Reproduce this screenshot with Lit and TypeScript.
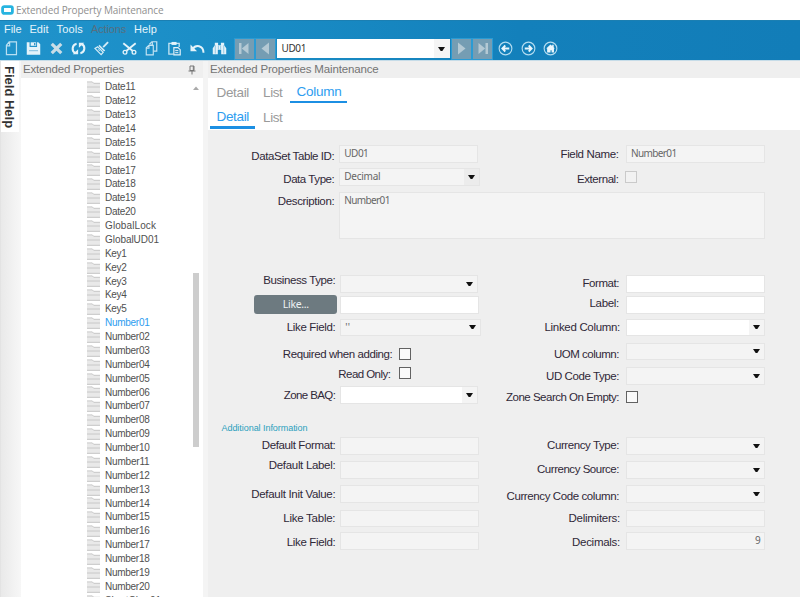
import { LitElement, html, css, svg, nothing } from "lit";
import { customElement, property } from "lit/decorators.js";
import { styleMap } from "lit/directives/style-map.js";

/** Single line of text tracked so that it occupies exactly `w` pixels. */
@customElement("fit-text")
class FitText extends LitElement {
  @property({ type: Number }) w = 0;
  @property() text = "";
  static styles = css`
    :host { display: inline-block; white-space: pre; }
    .t { display: inline-block; }
  `;
  updated() {
    const el = this.renderRoot.querySelector(".t") as HTMLElement;
    el.style.letterSpacing = "0px";
    const natural = el.getBoundingClientRect().width;
    if (this.w && natural) {
      el.style.letterSpacing = `${(this.w - natural) / this.text.length}px`;
    }
  }
  render() {
    return html`<span class="t">${this.text}</span>`;
  }
}

type Kind = "box" | "white" | "combo" | "whiteCombo" | "check" | "checkOff" | "area";

interface Field {
  label: string;
  w: number;        // label width
  end?: number;     // space between label and control
  base: number;     // label offset from the row top
  pitch: number;    // distance to the next row
  kind: Kind;
  width?: number;
  height?: number;
  value?: string;
  vw?: number;
  button?: boolean;
  right?: boolean;
}

const general: Field[][] = [
  [
    { label: "DataSet Table ID:", w: 83, end: 5, base: 3, pitch: 22.5, kind: "box", width: 139, value: "UD01", vw: 24 },
    { label: "Data Type:", w: 51, end: 5, base: 3, pitch: 24, kind: "combo", width: 140.5, height: 18, value: "Decimal", vw: 36 },
    { label: "Description:", w: 56.5, end: 5, base: 1.3, pitch: 83.5, kind: "area", width: 426, height: 47, value: "Number01", vw: 45.5 },
  ],
  [
    { label: "Field Name:", w: 58, end: 7.5, base: 1.3, pitch: 26, kind: "box", value: "Number01", vw: 45.5 },
    { label: "External:", w: 41.5, end: 7.5, base: -0.5, pitch: 104, kind: "checkOff" },
  ],
];

const mapping: Field[][] = [
  [
    { label: "Business Type:", w: 72, base: -3, pitch: 21, kind: "combo", width: 138 },
    { label: "Like...", w: 26, base: 0, pitch: 22.5, kind: "white", button: true },
    { label: "Like Field:", w: 48.5, base: 0.8, pitch: 29, kind: "combo", width: 141, value: "''", vw: 5 },
    { label: "Required when adding:", w: 109.5, end: 7, base: -1.8, pitch: 19.8, kind: "check" },
    { label: "Read Only:", w: 52, end: 9, base: -1.6, pitch: 19, kind: "check" },
    { label: "Zone BAQ:", w: 51.5, base: 0.4, pitch: 20, kind: "whiteCombo", width: 138 },
  ],
  [
    { label: "Format:", w: 36.5, end: 7, base: -0.5, pitch: 21, kind: "white" },
    { label: "Label:", w: 29.5, end: 7, base: -0.8, pitch: 22.5, kind: "white" },
    { label: "Linked Column:", w: 75.5, end: 6, base: 0.8, pitch: 24, kind: "whiteCombo" },
    { label: "UOM column:", w: 65, end: 7, base: 3, pitch: 24.5, kind: "combo" },
    { label: "UD Code Type:", w: 73, end: 7, base: 1.2, pitch: 24, kind: "combo" },
    { label: "Zone Search On Empty:", w: 113, end: 7, base: -2, pitch: 20, kind: "checkFlush" as Kind },
  ],
];

const additional: Field[][] = [
  [
    { label: "Default Format:", w: 73.5, base: -0.4, pitch: 24.3, kind: "box" },
    { label: "Default Label:", w: 66.5, base: -4.6, pitch: 24.2, kind: "box" },
    { label: "Default Init Value:", w: 84, base: 0.8, pitch: 24.5, kind: "box" },
    { label: "Like Table:", w: 52, base: -0.3, pitch: 22.3, kind: "box" },
    { label: "Like Field:", w: 48.5, base: 1.3, pitch: 20, kind: "box" },
  ],
  [
    { label: "Currency Type:", w: 72, end: 7, base: -0.4, pitch: 24.3, kind: "combo" },
    { label: "Currency Source:", w: 82, end: 7, base: -0.3, pitch: 24.2, kind: "combo" },
    { label: "Currency Code column:", w: 112.5, end: 7, base: 2.2, pitch: 24.5, kind: "combo" },
    { label: "Delimiters:", w: 51.5, end: 6, base: -0.3, pitch: 22.3, kind: "box" },
    { label: "Decimals:", w: 48, end: 6, base: 1.3, pitch: 20, kind: "box", value: "9", vw: 6, right: true },
  ],
];

@customElement("form-column")
class FormColumn extends LitElement {
  @property({ attribute: false }) fields: Field[] = [];
  static styles = css`
    :host { display: block; }
    .row { display: flex; align-items: flex-start; box-sizing: border-box; }
    .cell {
      display: flex; flex: none; justify-content: flex-end;
      width: var(--label, 132px); box-sizing: border-box;
    }
    .cell.inset { width: calc(var(--label, 132px) + 59px); }
    .label { font: 11.5px/16px "Liberation Sans", Arial, sans-serif; color: #2f2838; }
    .control {
      flex: none; display: flex; box-sizing: border-box; overflow: hidden;
      border: 1px solid #e5e5e5; background: #f4f4f4;
      font: 10px/15px "Noto Sans", "Open Sans", sans-serif; color: #666;
      padding-left: 4px; margin-right: -300px;
    }
    .control.white { background: #fff; }
    .control.right { justify-content: flex-end; padding-right: 3px; }
    .drop {
      display: flex; align-items: center; justify-content: center;
      width: 15px; margin-left: auto; background: #f4f4f4;
    }
    .drop.shade { background: #ececec; }
    .arrow { width: 7px; height: 4px; display: block; }
    .check {
      width: 12px; height: 12px; box-sizing: border-box; flex: none;
      border: 1px solid #626262; background: #fafafa;
    }
    .check.off { border-color: #cacaca; background: #f2f2f2; margin-left: -0.6px; }
    .button {
      width: 83px; height: 19px; margin: -1px 3px 0 0; border-radius: 3px;
      background: #6d7a80; color: #eef1f2; text-align: center;
      font: 10.5px/19px "Noto Sans", "Open Sans", sans-serif;
    }
  `;
  control(f: Field) {
    if (f.kind.startsWith("check")) {
      return html`<div class="check ${f.kind === "checkOff" ? "off" : ""}"></div>`;
    }
    const combo = f.kind === "combo" || f.kind === "whiteCombo";
    const white = f.kind === "white" || f.kind === "whiteCombo";
    return html`<div class="control ${white ? "white" : ""} ${f.right ? "right" : ""}"
      style=${styleMap({ width: `${f.width ?? 139}px`, height: `${f.height ?? 17.5}px` })}>
      ${f.value ? html`<fit-text class="value" .text=${f.value} .w=${f.vw ?? 0}></fit-text>` : nothing}
      ${combo
        ? html`<div class="drop ${f.value === "Decimal" ? "shade" : ""}">
            <svg class="arrow" viewBox="0 0 7 4"><path d="M0 0h7L4.3 4H2.7z" fill="#111" /></svg>
          </div>`
        : nothing}
    </div>`;
  }
  render() {
    return this.fields.map((f) => {
      const inset = f.kind === "check";
      return html`<div class="row" style=${styleMap({ height: `${f.pitch}px` })}>
        <div class="cell ${inset ? "inset" : ""}">
          ${f.button
            ? html`<div class="button"><fit-text .text=${f.label} .w=${f.w}></fit-text></div>`
            : html`<fit-text class="label" .text=${f.label} .w=${f.w}
                style=${styleMap({ marginTop: `${f.base}px`, marginRight: `${f.end ?? 5}px` })}></fit-text>`}
        </div>
        ${this.control(f)}
      </div>`;
    });
  }
}

const icons = {
  file: svg`<path d="M5.5 1h7.8v13.6H2.6V4.6z M6 1.2v3.9H2.6" fill="none" stroke="#b9dff2" stroke-width="1.3"/>`,
  save: svg`<path d="M.8 1.4h3v5h8V1.4h1.3l2.1 2v11.2H.8z" fill="#e4f3fa"/><path d="M5 1.4h5.8v3.7H5z" fill="#e4f3fa"/><path d="M8.6 2h1.4v2.4H8.6z" fill="#2a8fc5"/><path d="M3.2 9.7h9.6v1.2H3.2z" fill="#8cc4e2"/>`,
  close: svg`<path d="M4.1 1.8 8 5.6l3.9-3.8 2.4 2.4L10.4 8l3.9 3.8-2.4 2.4L8 10.4l-3.9 3.8-2.4-2.4L5.6 8 1.7 4.2z" fill="#c9dde7"/>`,
  refresh: svg`<path d="M6 2.9C1 3.9.2 10.8 4.8 12.8M10 13.1c5-1 5.8-7.9 1.2-9.9" fill="none" stroke="#e4f3fa" stroke-width="2.2"/><path d="M1.8 14.2h5.8V8.8zM14.2 1.8H8.4v5.4z" fill="#e4f3fa"/>`,
  broom: svg`<path d="M15 1.2 9.8 6.6" stroke="#d5ecf7" stroke-width="2"/><path d="M5.8 4l6.2 6.2-1.4 1.1L4.7 5.4z" fill="#d5ecf7"/><path d="M4 6.2l5.8 5.8-2.2 2.6L1 7.9z" fill="none" stroke="#d5ecf7" stroke-width="1.3"/><path d="M4.3 8.8l2 2" stroke="#d5ecf7"/>`,
  cut: svg`<path d="M1.4 2.4l9.8 8M14.6 2.4l-9.8 8" stroke="#e4f3fa" stroke-width="2"/><circle cx="3.2" cy="12" r="2" fill="none" stroke="#e4f3fa" stroke-width="1.4"/><circle cx="12.8" cy="12" r="2" fill="none" stroke="#e4f3fa" stroke-width="1.4"/>`,
  copy: svg`<path d="M6 3.6V3.3L8.4.8h5.2v10H10.2" fill="none" stroke="#c5e4f3" stroke-width="1.3"/><path d="M5.2 4.6h4.7v10.2H2.4V7.3zM8.9 1v3.2H6.3M5.3 5v2.7H2.6" fill="none" stroke="#c5e4f3" stroke-width="1.2"/>`,
  paste: svg`<path d="M7 14H2V2.6h11v3.7" fill="none" stroke="#c5e4f3" stroke-width="1.4"/><path d="M4.8 1h5.4v3.2H4.8z" fill="#e4f3fa"/><path d="M7.3 7h4.4l2.4 2.3v5.5H7.3z" fill="#2a8fc5" stroke="#e4f3fa" stroke-width="1.2"/><path d="M8.8 10.2h3.2M8.8 12.4h3.2" stroke="#e4f3fa"/>`,
  undo: svg`<path d="M2.8 8.6C6 3.6 14.2 4.2 14.4 12.6" fill="none" stroke="#e4f3fa" stroke-width="2.1"/><path d="M.5 3.6v7.2h7z" fill="#e4f3fa"/>`,
  find: svg`<path d="M3 1.8h3.5v2.7h3V1.8H13v2.6l2.2 3.2v6.6H9.8V9.4H6.2v4.8H.8V7.6L3 4.4z" fill="#e4f3fa"/><path d="M3.5 4.6v8.8M12.5 4.6v8.8M6.8 5v4M9.2 5v4" stroke="#69b2da" stroke-width=".7"/>`,
};

const arrowRing = (inner: unknown) => html`<svg class="ring" viewBox="0 0 16 16">
  <circle cx="8" cy="8" r="6.8" fill="none" stroke="#b4dcf0" stroke-width="1.2" />${inner}</svg>`;

const columns = [
  ...Array.from({ length: 10 }, (_, i) => `Date${i + 11}`),
  "GlobalLock", "GlobalUD01", "Key1", "Key2", "Key3", "Key4", "Key5",
  ...Array.from({ length: 20 }, (_, i) => `Number${String(i + 1).padStart(2, "0")}`),
  "ShortChar01",
];
const nameWidth = (n: string) =>
  n.startsWith("Date") ? 30.5 : n.startsWith("Number") ? 44.5 : n.startsWith("Key") ? 21.5
    : n === "GlobalLock" ? 51 : n === "GlobalUD01" ? 54 : 56;

@customElement("app-root")
class AppRoot extends LitElement {
  static styles = css`
    :host {
      display: flex; flex-direction: column; width: 800px; height: 597px; overflow: hidden;
      background: #efefef; font-family: "Liberation Sans", Arial, sans-serif;
    }
    svg { display: block; flex: none; }
    .title { display: flex; align-items: center; height: 20px; background: #fff; padding-left: 1px; flex: none; }
    .logo { width: 13px; height: 10px; margin-right: 2px; }
    .title fit-text { font: 10px/14px "Open Sans", sans-serif; color: #8f8f8f; margin-top: 0; }
    .ribbon {
      height: 41px; flex: none; border-bottom: 1px solid #c6dce8; border-top: 1px solid #1b7fb2; box-sizing: border-box;
      background: linear-gradient(90deg, #2093cb 0%, #1a8dc6 30%, #1380bb 65%, #127db8 100%);
    }
    .menu { display: flex; height: 17px; padding-left: 4px; font-size: 11px; line-height: 17px; color: #e6f4fb; }
    .menu fit-text { margin-right: 8px; }
    .menu .off { color: #566f80; }
    .tools { display: flex; align-items: center; height: 21px; }
    .icons { display: flex; width: 112.5px; }
    .icons.second { margin-left: 5.5px; width: 116.5px; }
    .icon { width: 22.6px; display: flex; justify-content: center; }
    .icon svg { width: 15px; height: 15px; }
    .nav { display: flex; gap: 2px; }
    .nav .btn {
      width: 19px; height: 20px; background: #759db3; display: flex; align-items: center; justify-content: center;
      outline: 1px solid #2a9bd4; outline-offset: -0.5px;
    }
    .btn svg { width: 19px; height: 19px; }
    .pick {
      display: flex; width: 173px; height: 19px; margin: 0 2px; background: #fff;
      font: 10px/19px "Noto Sans", "Open Sans", sans-serif; color: #333;
    }
    .pick fit-text { margin-left: 5px; }
    .pick .drop { margin-left: auto; width: 16px; background: #f5f5f5; display: flex; align-items: center; justify-content: center; }
    .drop svg { width: 7px; height: 4px; }
    .rings { display: flex; gap: 7.5px; margin-left: 6.5px; }
    .ring { width: 15px; height: 15px; }

    .work { display: flex; flex: 1; min-height: 0; }
    .dock { width: 21px; flex: none; background: linear-gradient(90deg, #e9e9e9, #f7f7f7); border-left: 1px solid #e3e3e3; box-sizing: border-box; }
    .help {
      width: 18px; height: 71px; background: #fff; writing-mode: vertical-rl; box-sizing: border-box;
      font-weight: bold; font-size: 13px; line-height: 16px; color: #333; padding: 5px 2px 0 0;
    }
    .bar { display: flex; align-items: center; height: 17px; background: #efefef; font-size: 11.5px; line-height: 17px; color: #747474; padding-left: 2px; }
    .tree { width: 182px; flex: none; background: #fff; display: flex; flex-direction: column; overflow: hidden; }
    .pin { width: 8px; height: 10px; margin-left: auto; margin-right: 7px; }
    .body { display: flex; flex: 1; min-height: 0; overflow: hidden; }
    .list { width: 172px; padding-top: 2.3px; }
    .node { display: flex; align-items: center; height: 13.88px; padding-left: 66px; font-size: 10px; line-height: 13.88px; color: #505050; }
    .node svg { width: 13px; height: 12px; margin-right: 5px; }
    .node.sel { color: #2d9df0; }
    .scroll { width: 6px; display: flex; flex-direction: column; align-items: center; padding-top: 8px; }
    .up { width: 6px; height: 4px; margin-bottom: 183px; }
    .thumb { width: 6px; height: 174px; background: #cdcdcd; flex: none; }
    .split { width: 5px; flex: none; background: #f4f4f4; }
    .main { flex: 1; display: flex; flex-direction: column; min-width: 0; }
    .tabs { display: flex; background: #fff; font-size: 13.5px; line-height: 16px; color: #9a9a9a; align-items: flex-start; flex: none; }
    .tabs.one { height: 25px; }
    .tabs.two { height: 27px; }
    .tab { padding: 7px 0 0 8.5px; width: 46.5px; box-sizing: border-box; flex: none; }
    .tab.on { color: #2d9df0; border-bottom: 3px solid #1c8fe3; }
    .one .tab.on { width: 56.5px; height: 26px; padding: 6px 0 0 6.5px; }
    .two .tab.on { width: 45px; height: 26px; margin-left: 1.5px; padding: 6px 0 0 7px; }
    .tab.list-tab { width: 35.5px; }
    .form { padding-top: 15px; }
    .pair { display: grid; grid-template-columns: 286.5px 1fr; }
    .gen { height: 130px; }
    .map { height: 147px; }
    .pair .l { --label: 132.3px; }
    .gen .l { --label: 131.3px; }
    .pair .r { --label: 131.5px; }
    .caption { font-size: 9px; line-height: 12px; color: #2ba0bd; padding-left: 13.5px; height: 15px; }
  `;

  render() {
    return html`
      <div class="title">
        <svg class="logo" viewBox="0 0 13 10"><rect x="1.6" y="1.6" width="9.8" height="6.8" rx="1.6" fill="#fff" stroke="#27b4e0" stroke-width="2.8"/></svg>
        <fit-text .text=${"Extended Property Maintenance"} .w=${147.5}></fit-text>
      </div>
      <div class="ribbon">
        <div class="menu">
          <fit-text .text=${"File"} .w=${17.5}></fit-text>
          <fit-text .text=${"Edit"} .w=${19}></fit-text>
          <fit-text .text=${"Tools"} .w=${26.5}></fit-text>
          <fit-text class="off" .text=${"Actions"} .w=${35}></fit-text>
          <fit-text .text=${"Help"} .w=${23}></fit-text>
        </div>
        <div class="tools">
          <div class="icons">
            ${[icons.file, icons.save, icons.close, icons.refresh, icons.broom].map((i) => this.icon(i))}
          </div>
          <div class="icons second">
            ${[icons.cut, icons.copy, icons.paste, icons.undo, icons.find].map((i) => this.icon(i))}
          </div>
          <div class="nav">
            ${this.nav(svg`<path d="M4 4h2.5v11H4zM13.5 4v11L6.8 9.5z" fill="#b4c9d4"/>`)}
            ${this.nav(svg`<path d="M13 3.5v12L5.5 9.5z" fill="#b4c9d4"/>`)}
          </div>
          <div class="pick">
            <fit-text .text=${"UD01"} .w=${24.5}></fit-text>
            <div class="drop"><svg viewBox="0 0 7 4"><path d="M0 0h7L4.3 4H2.7z" fill="#111"/></svg></div>
          </div>
          <div class="nav">
            ${this.nav(svg`<path d="M6 3.5v12l7.5-6z" fill="#b4c9d4"/>`)}
            ${this.nav(svg`<path d="M12.5 4H15v11h-2.5zM5.5 4v11l6.7-5.5z" fill="#b4c9d4"/>`)}
          </div>
          <div class="rings">
            ${arrowRing(svg`<path d="M12 8H5M7.8 4.8 4.6 8l3.2 3.2" fill="none" stroke="#eaf6fc" stroke-width="1.9"/>`)}
            ${arrowRing(svg`<path d="M4 8h7M8.2 4.8 11.4 8l-3.2 3.2" fill="none" stroke="#eaf6fc" stroke-width="1.9"/>`)}
            ${arrowRing(svg`<path d="M3.4 8 8 3.6l1.8 1.6V4h1.6v2.7L12.6 8h-.9v4.2H9.2V9.8H8v2.4H4.4V8z" fill="#eaf6fc"/>`)}
          </div>
        </div>
      </div>
      <div class="work">
        <div class="dock"><div class="help"><fit-text .text=${"Field Help"} .w=${0}></fit-text></div></div>
        <div class="tree">
          <div class="bar">
            <fit-text .text=${"Extended Properties"} .w=${101}></fit-text>
            <svg class="pin" viewBox="0 0 8 10"><path d="M2 1h4v4.5H2zM.5 6h7M4 6v3.5M5.3 1v4.5" fill="none" stroke="#777"/></svg>
          </div>
          <div class="body">
            <div class="list">
              ${columns.map((n) => html`<div class="node ${n === "Number01" ? "sel" : ""}">
                <svg viewBox="0 0 13 12"><path d="M0 1h5.5l1.5 1h6v10H0z" fill="#e9e9e9"/><path d="M0 .9h5.3l1.4 1.4H13M0 6h13M0 11.3h13" fill="none" stroke="#c4c4c4" stroke-width=".9"/></svg>
                <fit-text .text=${n} .w=${nameWidth(n)}></fit-text>
              </div>`)}
            </div>
            <div class="scroll">
              <svg class="up" viewBox="0 0 6 4"><path d="M0 4h6L3 .5z" fill="#aaa"/></svg>
              <div class="thumb"></div>
            </div>
          </div>
        </div>
        <div class="split"></div>
        <div class="main">
          <div class="bar"><fit-text .text=${"Extended Properties Maintenance"} .w=${168.5}></fit-text></div>
          <div class="tabs one">
            <div class="tab"><fit-text .text=${"Detail"} .w=${32.5}></fit-text></div>
            <div class="tab list-tab"><fit-text .text=${"List"} .w=${19.5}></fit-text></div>
            <div class="tab on"><fit-text .text=${"Column"} .w=${45}></fit-text></div>
          </div>
          <div class="tabs two">
            <div class="tab on"><fit-text .text=${"Detail"} .w=${32.5}></fit-text></div>
            <div class="tab"><fit-text .text=${"List"} .w=${19.5}></fit-text></div>
          </div>
          <div class="form">
            ${this.pair("gen", general)} ${this.pair("map", mapping)}
            <div class="caption"><fit-text .text=${"Additional Information"} .w=${86}></fit-text></div>
            ${this.pair("add", additional)}
          </div>
        </div>
      </div>
    `;
  }
  icon(shape: unknown) {
    return html`<div class="icon"><svg viewBox="0 0 16 16">${shape}</svg></div>`;
  }
  nav(shape: unknown) {
    return html`<div class="btn"><svg viewBox="0 0 19 19">${shape}</svg></div>`;
  }
  pair(name: string, [left, right]: Field[][]) {
    return html`<div class="pair ${name}">
      <form-column class="l" .fields=${left}></form-column>
      <form-column class="r" .fields=${right}></form-column>
    </div>`;
  }
}
